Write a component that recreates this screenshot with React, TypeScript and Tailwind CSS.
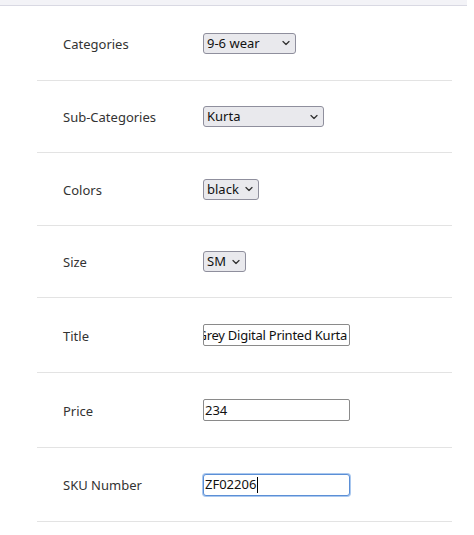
import React from "react"

const font = { fontFamily: '"Noto Sans", "Open Sans", Arial, sans-serif' }

function Chevron() {
  return (
    <svg
      className="pointer-events-none absolute right-[6px] top-1/2 -translate-y-1/2"
      width="8"
      height="5"
      viewBox="0 0 8 5"
      fill="none"
    >
      <path d="M1 1l3 3 3-3" stroke="#333" strokeWidth="1.3" strokeLinecap="round" strokeLinejoin="round" />
    </svg>
  )
}

function FakeSelect({ value, width }: { value: string; width: string }) {
  return (
    <div className={`relative ${width}`}>
      <div className="flex h-[21px] items-center rounded-[3px] border border-[#8f8f9d] bg-[#e9e9ed] pl-[3px] text-[13px] leading-none text-[#111]">
        {value}
      </div>
      <Chevron />
    </div>
  )
}

function FakeInput({ value, focused, scrolled }: { value: string; focused?: boolean; scrolled?: boolean }) {
  return (
    <div
      className={`flex h-[22px] w-[147px] items-center overflow-hidden whitespace-nowrap bg-white text-[13px] leading-none text-[#111] ${
        focused
          ? "rounded-[3px] border border-[#5b8fd6] shadow-[0_0_0_1px_#aac8ef]"
          : "rounded-[2px] border border-[#8a8a8a]"
      } ${scrolled ? "justify-end pr-[2px] tracking-[-0.25px]" : "pl-[1px]"}`}
    >
      <span className="shrink-0">{value}</span>
      {focused && <span className="ml-[1px] h-[16px] w-px bg-black" />}
    </div>
  )
}

type Row = { label: string; control: React.ReactNode; h: string }

export default function App() {
  const rows: Row[] = [
    { label: "Categories", control: <FakeSelect value="9-6 wear" width="w-[93px]" />, h: "h-[75px]" },
    { label: "Sub-Categories", control: <FakeSelect value="Kurta" width="w-[121px]" />, h: "h-[72px]" },
    { label: "Colors", control: <FakeSelect value="black" width="w-[56px]" />, h: "h-[73px]" },
    { label: "Size", control: <FakeSelect value="SM" width="w-[43px]" />, h: "h-[72px]" },
    { label: "Title", control: <FakeInput value="Grey Digital Printed Kurta" scrolled />, h: "h-[75px]" },
    { label: "Price", control: <FakeInput value="234" />, h: "h-[75px]" },
    { label: "SKU Number", control: <FakeInput value="ZF02206" focused />, h: "h-[74px]" },
  ]

  return (
    <div className="min-h-[535px] bg-white" style={font}>
      <div className="mr-[7px] h-[6px] border-b border-[#d9d9e3] bg-[#f3f3f7]" />
      <div className="ml-[37px] mr-[22px]">
        {rows.map((r) => (
          <div key={r.label} className={`flex items-center border-b border-[#e3e3e3] ${r.h}`}>
            <div className="w-[166px] pl-[26px] pt-[3px] text-[13px] text-[#333]">{r.label}</div>
            <div>{r.control}</div>
          </div>
        ))}
      </div>
    </div>
  )
}
